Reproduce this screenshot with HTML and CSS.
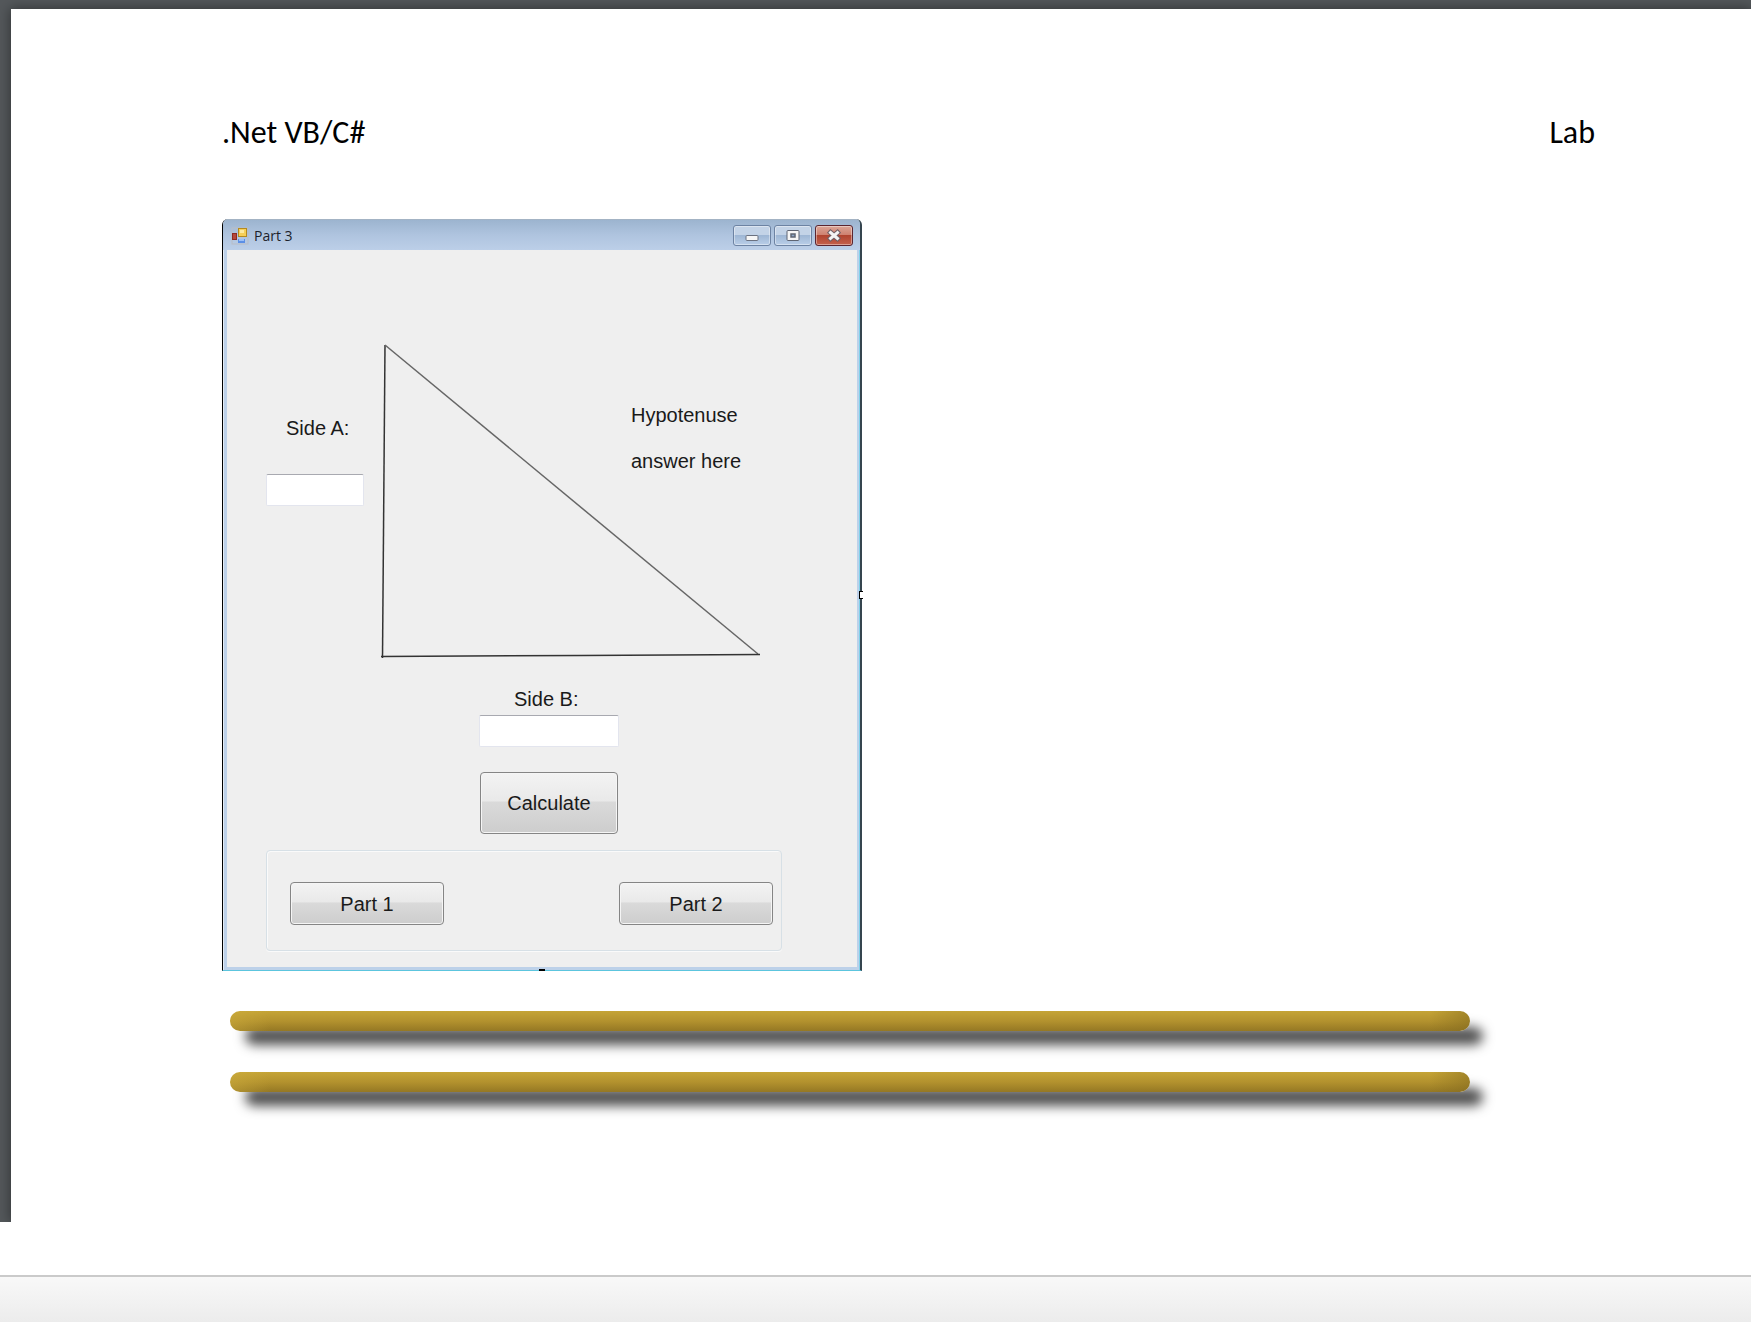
FILE: index.html
```html
<!DOCTYPE html>
<html lang="en">
<head>
<meta charset="utf-8">
<title>.Net VB/C# Lab</title>
<link rel="stylesheet" href="styles.css">
</head>
<body>
<main class="viewer">
  <article class="sheet">
    <header class="sheet-header">
      <span>.Net VB/C#</span>
      <span>Lab</span>
    </header>

    <section class="window">
      <div class="titlebar">
        <svg class="app-icon" width="18" height="18" viewBox="0 0 18 18" aria-hidden="true">
          <rect x="1" y="1" width="16" height="16" fill="none" stroke="#b9bdc6"/>
          <rect x="1.5" y="6.5" width="4" height="6" fill="#b5483c" stroke="#8e2a22"/>
          <rect x="7.5" y="1.5" width="8" height="8" fill="#f6cf58" stroke="#b58a1e"/>
          <rect x="9" y="3" width="4" height="3" fill="#fdeaa0"/>
          <rect x="7" y="12" width="7" height="4" fill="#5b8fe6"/>
          <rect x="8" y="12" width="5" height="2" fill="#9cc0f7"/>
        </svg>
        <span class="title">Part 3</span>
        <div class="controls">
          <button class="control" type="button" aria-label="Minimize">
            <svg width="36" height="19" viewBox="0 0 36 19"><rect x="12" y="9.500" width="12" height="5" rx="1" fill="#f6f6f6" stroke="#6b7180"/></svg>
          </button>
          <button class="control" type="button" aria-label="Maximize">
            <svg width="36" height="19" viewBox="0 0 36 19"><rect x="12" y="4.500" width="12" height="10" rx="1" fill="#f6f6f6" stroke="#5f6573"/><rect x="16" y="8" width="4" height="3" fill="#8ea6c6" stroke="#5f6573" stroke-width="1.500"/></svg>
          </button>
          <button class="control control-close" type="button" aria-label="Close">
            <svg width="36" height="19" viewBox="0 0 36 19"><path d="M14.500 6.500 21.500 12.500M21.500 6.500 14.500 12.500" stroke="#6f5f66" stroke-width="5" stroke-linecap="square"/><path d="M14.500 6.500 21.500 12.500M21.500 6.500 14.500 12.500" stroke="#f4f4f4" stroke-width="3" stroke-linecap="square"/></svg>
          </button>
        </div>
      </div>

      <form class="client">
        <div class="figure">
          <div class="side-a">
            <label for="side-a">Side A:</label>
            <input class="field" id="side-a" type="text">
          </div>
          <svg class="triangle" width="380" height="320" viewBox="0 0 380 320" fill="none" aria-hidden="true">
            <path d="M4 5 1.500 318" stroke="#333" stroke-width="1.500"/>
            <path d="M4 5 377 314" stroke="#666" stroke-width="1.500"/>
            <path d="M0 316.500 200 315.500 379 314.500" stroke="#333" stroke-width="1.500"/>
          </svg>
          <div class="answer">
            <span>Hypotenuse</span>
            <output for="side-a side-b">answer here</output>
          </div>
        </div>
        <div class="side-b">
          <label for="side-b">Side B:</label>
          <input class="field" id="side-b" type="text">
          <button class="push push-tall" type="button">Calculate</button>
        </div>
        <div class="group">
          <button class="push" type="button">Part 1</button>
          <button class="push" type="button">Part 2</button>
        </div>
      </form>
      <i class="handle handle-right"></i>
      <i class="handle handle-bottom"></i>
    </section>

    <div class="rules">
      <div class="rule"></div>
      <div class="rule"></div>
    </div>
  </article>
</main>
<footer class="statusbar"></footer>
</body>
</html>
```
FILE: styles.css
```css
* {
  box-sizing: border-box;
}

body {
  margin: 0;
  min-height: 100vh;
  display: flex;
  flex-direction: column;
  background: #fff;
  color: #000;
}

/* Document viewer and the sheet in it */
.viewer {
  padding: 9px 0 0 11px;
  background: #54585b;
  overflow: hidden;
}

.sheet {
  padding: 104px 156px 130px 211px;
  background: #fff;
  box-shadow: 0 0 12px 1px rgba(0, 0, 0, 0.4);
}

.sheet-header {
  display: flex;
  justify-content: space-between;
  margin-bottom: 66px;
  font: 32px/40px Carlito, Lato, sans-serif;
}

/* Application window */
.window {
  position: relative;
  width: 640px;
  border-left: 1px solid #000;
  border-right: 2px solid #35454f;
  border-bottom: 1px solid #5cc5de;
  border-radius: 6px 6px 0 0;
  background: linear-gradient(90deg, #e6edf5 1px, #bdd1e9 1px, #bdd1e9 calc(100% - 1px), #7fd0ea calc(100% - 1px));
}

.titlebar {
  display: flex;
  align-items: center;
  height: 31px;
  padding: 1px 7px 0 8px;
  border-top: 1px solid #a3b3c4;
  border-radius: 5px 5px 0 0;
  background: linear-gradient(#9cb4cf, #afc4df 50%, #bccfe8);
}

.title {
  margin-left: 5px;
  font: 14px/20px "Open Sans", sans-serif;
  color: #1c1f2b;
}

.controls {
  display: flex;
  gap: 3px;
  margin-left: auto;
}

.control {
  width: 38px;
  height: 21px;
  padding: 0;
  border: 1px solid #6d83a3;
  border-radius: 3px;
  background: linear-gradient(#c3d3e7 45%, #9fb7d5 50%, #b9cee8);
  box-shadow: inset 0 0 0 1px rgba(255, 255, 255, 0.4);
}

.control svg {
  display: block;
}

.control-close {
  border-color: #5b2530;
  background: linear-gradient(#dba597, #cf8271 45%, #b04430 50%, #c4614c);
}

.client {
  margin: 0 3px 3px 4px;
  padding: 90px 39px 16px;
  background: #efefef;
  font: 20px/24px "Liberation Sans", Arial, sans-serif;
  color: #1a1a1a;
}

.figure {
  display: grid;
  grid-template-columns: 98px 380px;
  column-gap: 17px;
}

.side-a {
  display: flex;
  flex-direction: column;
  gap: 34px;
  padding-top: 76px;
}

.side-a label {
  padding-left: 20px;
}

.triangle {
  grid-area: 1 / 2;
  display: block;
}

.answer {
  grid-area: 1 / 2;
  justify-self: end;
  display: flex;
  flex-direction: column;
  gap: 22px;
  width: 130px;
  padding-top: 63px;
}

.field {
  width: 100%;
  height: 32px;
  border: 1px solid #e3e5ee;
  border-top-color: #a8a9b0;
  border-radius: 2px;
  background: #fff;
  font: inherit;
}

.side-b {
  display: flex;
  flex-direction: column;
  width: 140px;
  margin: 27px 0 16px 213px;
}

.side-b label {
  padding-left: 35px;
}

.side-b .field {
  margin: 4px 0 25px;
}

.push {
  width: 154px;
  height: 43px;
  padding: 0;
  border: 1px solid #858585;
  border-radius: 4px;
  background: linear-gradient(#f3f3f3, #e9e9e9 47%, #dadada 48%, #cdcdcd);
  box-shadow: inset 0 0 0 1px #f5f5f5;
  font: inherit;
  color: inherit;
}

.push-tall {
  align-self: center;
  width: 138px;
  height: 62px;
}

.group {
  display: flex;
  justify-content: space-between;
  width: 516px;
  height: 101px;
  padding: 31px 8px 0 23px;
  border: 1px solid #d7e0e6;
  border-radius: 4px;
  box-shadow: inset 1px 1px #fafafa, 0 1px #fafafa;
}

/* Selection handles on the window's edges */
.handle {
  position: absolute;
  border: 1px solid #000;
  background: #fff;
}

.handle-right {
  top: 372px;
  right: -3px;
  width: 4px;
  height: 8px;
  border-right: 0;
}

.handle-bottom {
  bottom: -1px;
  left: calc(50% - 3px);
  width: 6px;
  height: 2px;
}

/* Gold divider bars */
.rules {
  display: flex;
  flex-direction: column;
  gap: 41px;
  margin: 40px 125px 0 8px;
}

.rule {
  height: 20px;
  border-radius: 10px;
  background:
    linear-gradient(90deg, rgba(206, 174, 62, 0.5), transparent 40px, transparent calc(100% - 40px), rgba(130, 105, 30, 0.5)),
    linear-gradient(#c5a436, #b3922e 50%, #957824);
  box-shadow: 14px 15px 12px -1px #505050;
}

.statusbar {
  flex: 1;
  min-height: 47px;
  margin-top: 53px;
  border-top: 2px solid #cacaca;
  background: linear-gradient(#f8f8f8, #ececec);
}
```
